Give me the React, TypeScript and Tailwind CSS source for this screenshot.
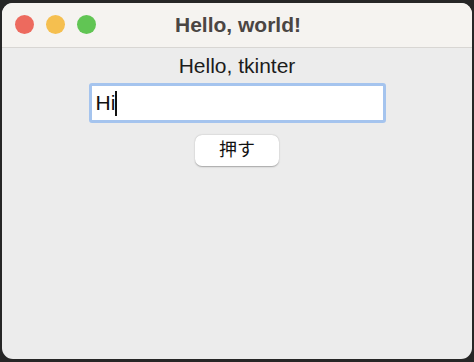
import React from 'react'

const App = () => {
    return (
        <div className="w-[474px] h-[362px] bg-[#262626] pl-[2px] pr-[2px] pt-[3px] pb-[3px]" style={{ fontFamily: '"Liberation Sans", "Noto Sans CJK JP", sans-serif' }}>
            <div className="w-full h-full rounded-[11px] overflow-hidden bg-[#ececec] flex flex-col">
                <div className="h-[45px] bg-[#f5f3f0] border-b border-[#d8d6d3] relative flex items-center justify-center">
                    <div className="absolute left-[13px] top-[12px] flex gap-[12px]">
                        <span className="w-[19px] h-[19px] rounded-full bg-[#ed6a5e]" />
                        <span className="w-[19px] h-[19px] rounded-full bg-[#f5bf4f]" />
                        <span className="w-[19px] h-[19px] rounded-full bg-[#61c554]" />
                    </div>
                    <h1 className="text-[21px] font-bold text-[#4a4543] pl-[2px]">Hello, world!</h1>
                </div>
                <div className="flex flex-col items-center">
                    <p className="mt-[5px] text-[21px] leading-[25px] text-[#1c1c1c]">Hello, tkinter</p>
                    <div className="mt-[5px] w-[297px] h-[40px] bg-white border-[3px] border-[#a5c4ee] rounded-[3px] flex items-center pl-[4px]">
                        <span className="text-[21px] text-[#111]">Hi</span>
                        <span className="w-[2px] h-[25px] bg-[#111]" />
                    </div>
                    <button className="mt-[12px] w-[84px] h-[31px] bg-white rounded-[7px] shadow-[0_0.5px_1.5px_rgba(0,0,0,0.3)] text-[18px] text-[#111]">押す</button>
                </div>
            </div>
        </div>
    )
}

export default App
